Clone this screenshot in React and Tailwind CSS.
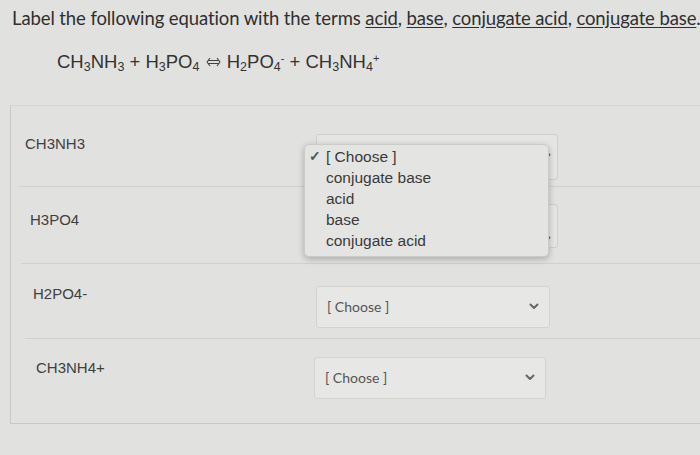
import React from "react";

function Chevron({ className = "" }) {
  return (
    <svg className={className} width="10" height="7" viewBox="0 0 10 7" fill="none">
      <path d="M1.5 1.5 L5 5 L8.5 1.5" stroke="#666" strokeWidth="2" strokeLinecap="round" strokeLinejoin="round" />
    </svg>
  );
}

function Select({ w = "w-[234px]" }) {
  return (
    <div className={`${w} h-[42px] border border-[#d3d4d0] rounded-[3px] bg-[#e7e8e5] flex items-center justify-between pl-[10px] pr-[10px]`}>
      <span className="text-[14px] text-[#555] font-['Lato',sans-serif]">[ Choose ]</span>
      <Chevron />
    </div>
  );
}

function DArrow() {
  return (
    <svg width="15" height="10" viewBox="0 0 15 10" fill="none" className="inline-block align-[1px] mx-[1px]">
      <path d="M4 1 L1 5 L4 9 M11 1 L14 5 L11 9 M2 3.5 H13 M2 6.5 H13" stroke="#444" strokeWidth="1.1" strokeLinejoin="round" />
    </svg>
  );
}

export default function App() {
  const label = "text-[15px] text-[#404040] font-['Liberation_Sans',Arial,sans-serif]";
  const sub = "text-[12.5px]";
  return (
    <div className="w-[700px] h-[455px] overflow-hidden bg-[#e1e2df] relative">
      <div className="pl-[12px] pt-[5px] text-[18.5px] text-[#2f2f2f] font-['Lato',sans-serif] whitespace-nowrap tracking-[-0.1px]">
        Label the following equation with the terms{" "}
        <span className="underline underline-offset-2">acid</span>,{" "}
        <span className="underline underline-offset-2">base</span>,{" "}
        <span className="underline underline-offset-2">conjugate acid</span>,{" "}
        <span className="underline underline-offset-2">conjugate base</span>.
      </div>
      <div className="pl-[57px] pt-[15px] text-[18.5px] leading-[27px] text-[#333] font-['Liberation_Sans',Arial,sans-serif] whitespace-nowrap">
        CH<sub className={sub}>3</sub>NH<sub className={sub}>3</sub> + H<sub className={sub}>3</sub>PO<sub className={sub}>4</sub>{" "}
        <DArrow /> H<sub className={sub}>2</sub>PO<sub className={sub}>4</sub><sup className="text-[11px]">-</sup> + CH<sub className={sub}>3</sub>NH<sub className={sub}>4</sub><sup className="text-[11px]">+</sup>
      </div>

      <div className="mt-[30px] ml-[10px] border-t border-[#d4d5d1] border-l border-l-[#c9cac6] border-b border-b-[#c9cac6]">
        {/* Row 1 */}
        <div className="h-[80px] flex items-start relative">
          <div className={`${label} pl-[14px] pt-[27px] w-[305px]`}>CH3NH3</div>
          <div className="pt-[28px]">
            <div className="w-[242px] h-[46px] border border-[#cfd0cc] rounded-[3px] bg-[#e5e6e3] flex items-center justify-end pr-[6px]">
              <Chevron />
            </div>
          </div>
          {/* Open dropdown list */}
          <div className="absolute left-[293px] top-[38px] w-[245px] h-[113px] z-10 rounded-[5px] bg-[#e4e5e2] border border-[#cbccc8] shadow-[0_2px_6px_rgba(0,0,0,0.25)] pt-[1px] font-['Liberation_Sans',Arial,sans-serif] text-[15.5px] text-[#3a3a3a] leading-[21px]">
            <div className="flex"><span className="w-[21px] text-right pr-[5px] text-[14px] font-bold text-[#555]">✓</span><span>[ Choose ]</span></div>
            <div className="pl-[21px]">conjugate base</div>
            <div className="pl-[21px]">acid</div>
            <div className="pl-[21px]">base</div>
            <div className="pl-[21px]">conjugate acid</div>
          </div>
        </div>
        {/* Row 2 */}
        <div className="h-[77px] flex items-start border-t border-[#d0d1cd] ml-[8px]">
          <div className={`${label} pl-[11px] pt-[22px] w-[297px]`}>H3PO4</div>
          <div className="pt-[17px]">
            <div className="w-[242px] h-[44px] border border-[#cfd0cc] rounded-[3px] bg-[#e5e6e3] flex items-end justify-end pr-[6px] pb-[4px]">
              <Chevron />
            </div>
          </div>
        </div>
        {/* Row 3 */}
        <div className="h-[75px] flex items-start border-t border-[#d0d1cd] ml-[10px]">
          <div className={`${label} pl-[12px] pt-[19px] w-[295px]`}>H2PO4-</div>
          <div className="pt-[22px]">
            <Select w="w-[234px]" />
          </div>
        </div>
        {/* Row 4 */}
        <div className="h-[85px] flex items-start border-t border-[#d0d1cd] ml-[14px]">
          <div className={`${label} pl-[11px] pt-[18px] w-[289px]`}>CH3NH4+</div>
          <div className="pt-[18px]">
            <Select w="w-[232px]" />
          </div>
        </div>
      </div>
    </div>
  );
}
